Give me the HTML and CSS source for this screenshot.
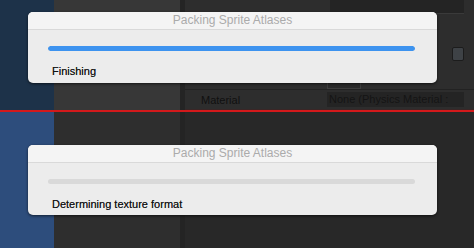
FILE: index.html
```html
<!DOCTYPE html>
<html lang="en">
<head>
    <meta charset="UTF-8">
    <title>Packing Sprite Atlases</title>
    <link rel="stylesheet" href="styles.css">
</head>
<body>
    <div class="scene">
        <div class="half top">
            <div class="sidebar"></div>
            <div class="hierarchy"></div>
            <div class="gutter"></div>
            <div class="inspector">
                <div class="row row-head">
                    <span class="field field-head"></span>
                </div>
                <div class="row row-check">
                    <span class="checkbox"></span>
                </div>
                <div class="row row-btn">
                    <span class="mini-btn"></span>
                </div>
                <div class="row row-material">
                    <span class="label">Material</span>
                    <span class="field">None (Physics Material :</span>
                </div>
            </div>

            <div class="dialog dialog-one">
                <div class="dialog-title">Packing Sprite Atlases</div>
                <div class="dialog-body">
                    <div class="progress"><div class="progress-fill" style="width: 100%"></div></div>
                    <div class="status">Finishing</div>
                </div>
            </div>
        </div>

        <div class="divider"></div>

        <div class="half bottom">
            <div class="sidebar"></div>
            <div class="hierarchy"></div>
            <div class="gutter"></div>
            <div class="inspector"></div>

            <div class="dialog dialog-two">
                <div class="dialog-title">Packing Sprite Atlases</div>
                <div class="dialog-body">
                    <div class="progress"><div class="progress-fill" style="width: 0%"></div></div>
                    <div class="status">Determining texture format</div>
                </div>
            </div>
        </div>
    </div>
</body>
</html>
```

FILE: styles.css
```css
/* Unity editor behind two progress sheets */
html,
body {
    margin: 0;
    padding: 0;
    width: 474px;
    height: 248px;
    overflow: hidden;
    background-color: #2b2b2b;
    font-family: "Liberation Sans", Arial, sans-serif;
}

.scene {
    display: flex;
    flex-direction: column;
    height: 248px;
}

.half {
    position: relative;
    display: flex;
}

.top {
    height: 110px;
}

.bottom {
    flex: 1;
}

.divider {
    height: 2px;
    background-color: #d3191b;
}

.sidebar {
    width: 54px;
}

.top .sidebar {
    background-color: #1d3249;
}

.bottom .sidebar {
    background-color: #2d4d7c;
}

.hierarchy {
    width: 126px;
}

.top .hierarchy {
    background-color: #373737;
}

.bottom .hierarchy {
    background-color: #2e2e2e;
}

.gutter {
    width: 5px;
    background-color: #242424;
}

.inspector {
    flex: 1;
    display: flex;
    flex-direction: column;
}

.top .inspector {
    background-color: #2d2d2d;
}

.bottom .inspector {
    background-color: #282828;
}

/* inspector rows peeking out behind the sheet */
.row {
    display: flex;
    align-items: center;
}

.row-head {
    height: 12px;
    padding-left: 145px;
}

.field-head {
    flex: 1;
    height: 9px;
    background-color: #262626;
    border-bottom: 1px solid #3a3a3a;
}

.row-check {
    height: 50px;
    justify-content: flex-end;
    padding-right: 10px;
    align-items: flex-end;
}

.checkbox {
    width: 10px;
    height: 12px;
    border-radius: 2px;
    background-color: #3e4246;
    border: 1px solid #1c1c1c;
}

.row-btn {
    height: 29px;
    padding-left: 142px;
    align-items: flex-end;
}

.mini-btn {
    width: 32px;
    height: 8px;
    background-color: #2a2a2a;
    border: 1px solid #3d3d3d;
    border-top: none;
}

.row-material {
    height: 19px;
    border-top: 1px solid #222;
    border-bottom: 1px solid #3a2626;
}

.label {
    width: 126px;
    padding-left: 16px;
    font-size: 11px;
    color: #101010;
}

.field {
    flex: 1;
    height: 15px;
    line-height: 15px;
    margin-right: 10px;
    padding-left: 2px;
    font-size: 11px;
    color: #141414;
    background-color: #242424;
    white-space: nowrap;
    overflow: hidden;
}

/* progress sheets */
.dialog {
    position: absolute;
    left: 28px;
    width: 409px;
    background-color: #ececec;
    border-radius: 5px;
    box-shadow: 0 1px 3px rgba(0, 0, 0, 0.6);
    overflow: hidden;
}

.dialog-one {
    top: 12px;
    height: 71px;
}

.dialog-two {
    top: 33px;
    height: 70px;
}

.dialog-title {
    height: 17px;
    line-height: 17px;
    text-align: center;
    font-size: 12px;
    color: #ababab;
    background-color: #f4f4f4;
    border-bottom: 1px solid #d9d9d9;
}

.dialog-body {
    padding: 16px 22px 0 20px;
}

.progress {
    height: 5px;
    border-radius: 3px;
    background-color: #d9d9d9;
    overflow: hidden;
}

.progress-fill {
    height: 100%;
    background-color: #3d93ef;
    border-radius: 3px;
}

.status {
    margin-top: 14px;
    padding-left: 4px;
    font-size: 11px;
    color: #111;
    text-shadow: 0 0 0.4px rgba(0, 0, 0, 0.6);
}
```
